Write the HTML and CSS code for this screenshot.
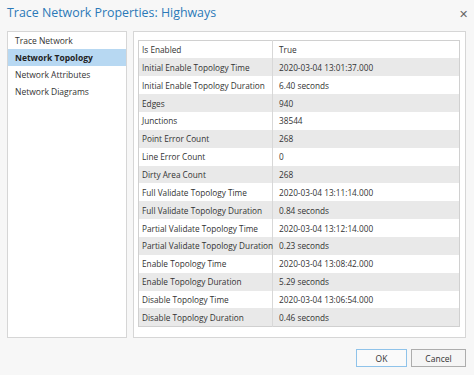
FILE: index.html
```html
<!DOCTYPE html>
<html lang="en">
<head>
    <meta charset="UTF-8">
    <title>Trace Network Properties: Highways</title>
    <link rel="stylesheet" href="styles.css">
</head>
<body>
    <div class="dialog">
        <header class="titlebar">
            <h1>Trace Network Properties: Highways</h1>
            <span class="close">&#x2715;</span>
        </header>

        <div class="content">
            <ul class="nav">
                <li>Trace Network</li>
                <li class="active">Network Topology</li>
                <li>Network Attributes</li>
                <li>Network Diagrams</li>
            </ul>

            <div class="panel">
                <table class="props">
                    <colgroup>
                        <col class="col-name">
                        <col>
                    </colgroup>
                    <tr><td>Is Enabled</td><td>True</td></tr>
                    <tr><td>Initial Enable Topology Time</td><td>2020-03-04 13:01:37.000</td></tr>
                    <tr><td>Initial Enable Topology Duration</td><td>6.40 seconds</td></tr>
                    <tr><td>Edges</td><td>940</td></tr>
                    <tr><td>Junctions</td><td>38544</td></tr>
                    <tr><td>Point Error Count</td><td>268</td></tr>
                    <tr><td>Line Error Count</td><td>0</td></tr>
                    <tr><td>Dirty Area Count</td><td>268</td></tr>
                    <tr><td>Full Validate Topology Time</td><td>2020-03-04 13:11:14.000</td></tr>
                    <tr><td>Full Validate Topology Duration</td><td>0.84 seconds</td></tr>
                    <tr><td>Partial Validate Topology Time</td><td>2020-03-04 13:12:14.000</td></tr>
                    <tr><td>Partial Validate Topology Duration</td><td>0.23 seconds</td></tr>
                    <tr><td>Enable Topology Time</td><td>2020-03-04 13:08:42.000</td></tr>
                    <tr><td>Enable Topology Duration</td><td>5.29 seconds</td></tr>
                    <tr><td>Disable Topology Time</td><td>2020-03-04 13:06:54.000</td></tr>
                    <tr><td>Disable Topology Duration</td><td>0.46 seconds</td></tr>
                </table>
            </div>
        </div>

        <footer class="buttons">
            <button class="btn default">OK</button>
            <button class="btn cancel">Cancel</button>
        </footer>
    </div>
</body>
</html>
```

FILE: styles.css
```css
* {
    margin: 0;
    padding: 0;
    box-sizing: border-box;
}

body {
    font-family: 'Open Sans', 'Noto Sans', sans-serif;
    background: #fff;
    color: #333;
}

.dialog {
    width: 474px;
    height: 375px;
    background: #f7f7f7;
    display: flex;
    flex-direction: column;
}

.titlebar {
    height: 31px;
    display: flex;
    align-items: center;
    justify-content: space-between;
    padding: 0 6px 0 7px;
}

.titlebar h1 {
    font-size: 12.4px;
    font-weight: normal;
    color: #2b79b8;
    margin-top: -6px;
}

.close {
    font-size: 11px;
    color: #666;
    margin-top: -5px;
}

.content {
    display: flex;
    gap: 6px;
    padding: 0 8px 0 7px;
    height: 307px;
}

.nav {
    list-style: none;
    width: 120px;
    background: #fff;
    border: 1px solid #d6d6d6;
    font-size: 8.5px;
    color: #333;
}

.nav li {
    height: 17px;
    line-height: 17px;
    padding-left: 7px;
}

.nav li.active {
    background: #b7d8f2;
    font-weight: bold;
    color: #222;
}

.panel {
    flex: 1;
    background: #fff;
    border: 1px solid #d6d6d6;
    padding: 8px 5px 0 4px;
}

.props {
    width: 100%;
    table-layout: fixed;
    border-collapse: collapse;
    border: 1px solid #d0d0d0;
    font-size: 8.25px;
    color: #333;
}

.props .col-name {
    width: 134px;
}

.props td {
    height: 17.87px;
    padding: 0 3px;
    white-space: nowrap;
}

.props td:first-child {
    border-right: 1px solid #d8d8d8;
}

.props td + td {
    padding-left: 6px;
}

.props tr:nth-child(even) {
    background: #e9e9e9;
}

.buttons {
    display: flex;
    justify-content: flex-end;
    gap: 4px;
    padding: 11px 8px 0 0;
}

.btn {
    font-family: inherit;
    font-size: 8.5px;
    color: #333;
    width: 51px;
    height: 18px;
    background: #f5f5f5;
    border: 1px solid #adadad;
}

.btn.default {
    border-color: #8fc3ea;
    background: #fafafa;
}

.btn.cancel {
    width: 55px;
}
```
